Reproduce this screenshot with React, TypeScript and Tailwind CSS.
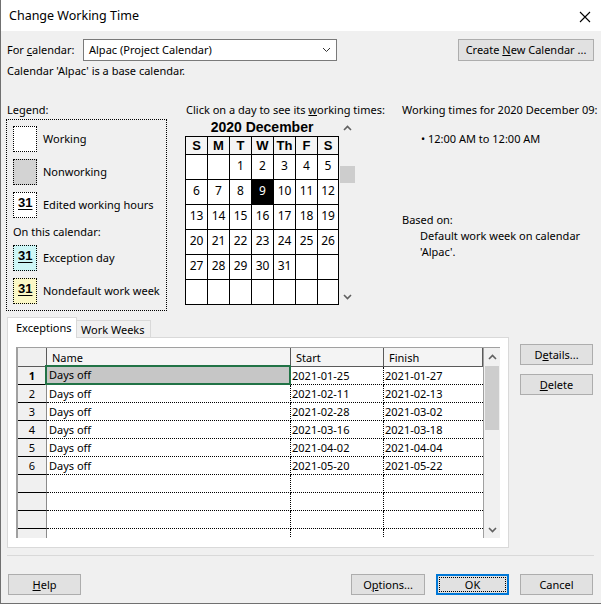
import React from "react";

function Btn({ children, className = "" }: { children: React.ReactNode; className?: string }) {
  return (
    <div className={"h-[21px] bg-[#e1e1e1] border border-[#adadad] flex items-center justify-center whitespace-nowrap pb-[1px] " + className}>
      {children}
    </div>
  );
}

function ChevDown({ w = 9, c = "#606060", sw = 1.4 }: { w?: number; c?: string; sw?: number }) {
  return (
    <svg width={w} height={6} viewBox="0 0 9 6">
      <path d="M1 1 L4.5 4.5 L8 1" fill="none" stroke={c} strokeWidth={sw} />
    </svg>
  );
}
function ChevUp({ w = 9, c = "#606060", sw = 1.4 }: { w?: number; c?: string; sw?: number }) {
  return (
    <svg width={w} height={6} viewBox="0 0 9 6">
      <path d="M1 5 L4.5 1.5 L8 5" fill="none" stroke={c} strokeWidth={sw} />
    </svg>
  );
}

function Swatch({ kind }: { kind: "working" | "non" | "edited" | "exc" | "nd" }) {
  const bg =
    kind === "non"
      ? "bg-[#d3d3d3]"
      : kind === "exc"
      ? "bg-[#cdf6f6]"
      : kind === "nd"
      ? "bg-[#fbf8c6]"
      : "bg-white";
  return (
    <div className={"w-[24px] h-[26px] border border-dotted border-black shrink-0 " + bg}>
      {kind === "edited" || kind === "exc" || kind === "nd" ? (
        <div className="pl-[4px] pt-[3px] font-['Liberation_Sans',sans-serif] font-bold text-[13px] leading-[13px] underline underline-offset-[2px]">
          31
        </div>
      ) : null}
    </div>
  );
}

const weeks: (number | null)[][] = [
  [null, null, 1, 2, 3, 4, 5],
  [6, 7, 8, 9, 10, 11, 12],
  [13, 14, 15, 16, 17, 18, 19],
  [20, 21, 22, 23, 24, 25, 26],
  [27, 28, 29, 30, 31, null, null],
  [null, null, null, null, null, null, null],
];

const exceptions = [
  ["2021-01-25", "2021-01-27"],
  ["2021-02-11", "2021-02-13"],
  ["2021-02-28", "2021-03-02"],
  ["2021-03-16", "2021-03-18"],
  ["2021-04-02", "2021-04-04"],
  ["2021-05-20", "2021-05-22"],
];

export default function App() {
  return (
    <div className="w-[601px] h-[604px] bg-[#f0f0f0] text-[11px] text-black font-['Noto_Sans',sans-serif] border-l border-b border-[#707070] overflow-hidden leading-none whitespace-nowrap">
      {/* Title bar */}
      <div className="h-[31px] bg-white flex items-center justify-between pl-[8px] pr-[10px] pt-[2px]">
        <span className="text-[12.5px]">Change Working Time</span>
        <svg width="12" height="12" viewBox="0 0 12 12">
          <path d="M1 1 L11 11 M11 1 L1 11" stroke="#000" strokeWidth="1.1" />
        </svg>
      </div>

      <div className="pl-[6px] pr-[7px]">
        {/* For calendar row */}
        <div className="mt-[8px] h-[22px] flex items-center">
          <div className="w-[76px] pb-[1px]">
            For <span className="underline">c</span>alendar:
          </div>
          <div className="w-[254px] h-[22px] bg-white border border-[#7a7a7a] flex items-center justify-between pl-[5px] pr-[5px] pb-[1px]">
            <span>Alpac (Project Calendar)</span>
            <ChevDown w={9} c="#333" sw={1} />
          </div>
          <div className="flex-1" />
          <Btn className="w-[136px] h-[22px]">
            <span>
              Create <span className="underline">N</span>ew Calendar ...
            </span>
          </Btn>
        </div>
        <div className="mt-[2px] h-[16px] leading-[16px]">Calendar 'Alpac' is a base calendar.</div>

        {/* Middle section */}
        <div className="mt-[23px] flex">
          {/* Legend */}
          <div className="-ml-[1px] w-[161px] flex flex-col shrink-0">
            <div className="h-[16px] leading-[16px] pl-[1px]">Legend:</div>
            <div className="mt-[1px] h-[192px] border border-dotted border-black pl-[6px] pt-[6px] flex flex-col">
              <div className="flex items-center gap-[6px]">
                <Swatch kind="working" />
                <span className="pb-[2px]">Working</span>
              </div>
              <div className="mt-[7px] flex items-center gap-[6px]">
                <Swatch kind="non" />
                <span className="pb-[2px]">Nonworking</span>
              </div>
              <div className="mt-[7px] flex items-center gap-[6px]">
                <Swatch kind="edited" />
                <span className="pb-[2px]">Edited working hours</span>
              </div>
              <div className="mt-[6px] h-[16px] leading-[16px]">On this calendar:</div>
              <div className="mt-[5px] flex items-center gap-[6px]">
                <Swatch kind="exc" />
                <span className="pb-[2px]">Exception day</span>
              </div>
              <div className="mt-[7px] flex items-center gap-[6px]">
                <Swatch kind="nd" />
                <span className="pb-[2px]">Nondefault work week</span>
              </div>
            </div>
          </div>

          {/* Calendar */}
          <div className="ml-[18px] w-[171px] shrink-0 flex flex-col">
            <div className="h-[16px] leading-[16px] pl-[1px]">
              Click on a day to see its <span className="underline">w</span>orking times:
            </div>
            <div className="mt-[1px] flex">
              <div className="flex flex-col">
                <div className="h-[17px] flex items-center justify-center pb-[1px] font-['Liberation_Sans',sans-serif] font-bold text-[14px]">
                  2020 December
                </div>
                <div className="grid grid-cols-[repeat(6,21px)_20px] grid-rows-[17px_repeat(6,24px)] gap-px bg-black p-px w-fit">
                  {["S", "M", "T", "W", "Th", "F", "S"].map((h, i) => (
                    <div
                      key={"h" + i}
                      className="bg-[#f4f4f4] flex items-center justify-center font-['Liberation_Sans',sans-serif] font-bold text-[13px]"
                    >
                      {h}
                    </div>
                  ))}
                  {weeks.flat().map((d, i) => (
                    <div
                      key={i}
                      className={
                        d === 9
                          ? "bg-black text-white flex items-center justify-center text-[12px] pb-[2px]"
                          : "bg-white flex items-center justify-center text-[12px] pb-[2px]"
                      }
                    >
                      {d ?? ""}
                    </div>
                  ))}
                </div>
              </div>
              <div className="w-[16px] h-[186px] flex flex-col">
                <div className="h-[17px] flex items-center justify-center">
                  <ChevUp w={9} c="#606060" sw={1.6} />
                </div>
                <div className="mt-[30px] h-[17px] bg-[#cdcdcd] ml-[1px] w-[15px]" />
                <div className="flex-1" />
                <div className="h-[17px] flex items-center justify-center">
                  <ChevDown w={9} c="#606060" sw={1.6} />
                </div>
              </div>
            </div>
          </div>

          {/* Info */}
          <div className="ml-[46px] flex flex-col">
            <div className="h-[16px] leading-[16px]">Working times for 2020 December 09:</div>
            <div className="mt-[13px] h-[16px] leading-[16px] pl-[19px]">• 12:00 AM to 12:00 AM</div>
            <div className="mt-[65px] h-[16px] leading-[16px]">Based on:</div>
            <div className="h-[16px] leading-[16px] pl-[18px]">Default work week on calendar</div>
            <div className="h-[15px] leading-[15px] pl-[18px]">'Alpac'.</div>
          </div>
        </div>

        {/* Tabs */}
        <div className="mt-[6px] h-[20px] flex items-end">
          <div className="relative z-10 -mb-px h-[21px] w-[70px] bg-white border-l border-t border-r border-[#d9d9d9] flex items-center pl-[8px] pb-[2px]">
            Exceptions
          </div>
          <div className="h-[17px] w-[74px] bg-[#f0f0f0] border-t border-r border-[#d9d9d9] flex items-center pl-[4px]">
            Work Weeks
          </div>
        </div>

        <div className="flex">
          {/* Panel */}
          <div className="w-[502px] h-[211px] bg-white border border-[#d9d9d9] pl-[8px] pt-[9px]">
            <div className="w-[484px] h-[191px] border-t border-l-2 border-[#a0a0a0] flex overflow-hidden">
              <div className="flex flex-col">
                {/* header */}
                <div className="flex h-[19px] shrink-0">
                  <div className="w-[29px] bg-[#f0f0f0] border-r border-b border-[#5a5a5a]" />
                  <div className="w-[244px] bg-[#f4f4f4] border-r border-b border-[#5a5a5a] flex items-center pt-[1px] pl-[5px]">
                    Name
                  </div>
                  <div className="w-[93px] bg-[#f4f4f4] border-r border-b border-[#5a5a5a] flex items-center pt-[1px] pl-[5px]">
                    Start
                  </div>
                  <div className="w-[99px] bg-[#f4f4f4] border-r border-b border-[#5a5a5a] flex items-center pt-[1px] pl-[5px]">
                    Finish
                  </div>
                </div>
                {Array.from({ length: 10 }).map((_, i) => {
                  const ex = exceptions[i];
                  const sel = i === 0;
                  return (
                    <div key={i} className="flex h-[18px] shrink-0">
                      <div
                        className={
                          "w-[29px] bg-[#f0f0f0] border-r border-r-[#8a8a8a] border-b border-b-black flex items-center justify-center pb-[1px] " +
                          (sel ? "font-bold" : "")
                        }
                      >
                        {ex ? i + 1 : ""}
                      </div>
                      {sel ? (
                        <div className="relative w-[244px] border-r border-b border-dotted border-black">
                          <div className="absolute -left-[2px] -top-[2px] w-[246px] h-[20px] bg-[#c6c6c6] border-2 border-[#217346] flex items-center pl-[2px] pb-[1px]">
                            Days off
                          </div>
                        </div>
                      ) : (
                        <div className="w-[244px] border-r border-b border-dotted border-black flex items-center pl-[2px] pb-[1px]">
                          {ex ? "Days off" : ""}
                        </div>
                      )}
                      <div className="w-[93px] border-r border-b border-dotted border-black flex items-center pl-[1px] pb-[1px]">
                        {ex ? ex[0] : ""}
                      </div>
                      <div className="w-[99px] border-b border-dotted border-black border-r-0 flex items-center pl-[1px] pb-[1px]">
                        {ex ? ex[1] : ""}
                      </div>
                    </div>
                  );
                })}
              </div>
              {/* scrollbar */}
              <div className="w-[17px] h-full border-l border-[#a0a0a0] bg-[#f0f0f0] flex flex-col">
                <div className="h-[17px] flex items-center justify-center">
                  <ChevUp w={9} c="#606060" sw={1.6} />
                </div>
                <div className="mt-px h-[64px] mx-[1px] bg-[#cdcdcd]" />
                <div className="flex-1" />
                <div className="h-[17px] flex items-center justify-center">
                  <ChevDown w={9} c="#606060" sw={1.6} />
                </div>
              </div>
            </div>
          </div>

          {/* Right buttons */}
          <div className="ml-[11px] pt-[7px] flex flex-col gap-[9px]">
            <Btn className="w-[73px]">
              <span>
                D<span className="underline">e</span>tails...
              </span>
            </Btn>
            <Btn className="w-[73px]">
              <span>
                <span className="underline">D</span>elete
              </span>
            </Btn>
          </div>
        </div>

        <div className="mt-[7px] h-px bg-[#d9d9d9]" />

        <div className="mt-[18px] flex items-center">
          <Btn className="ml-[1px] w-[73px]">
            <span>
              <span className="underline">H</span>elp
            </span>
          </Btn>
          <div className="flex-1" />
          <Btn className="w-[74px]">
            <span>
              O<span className="underline">p</span>tions...
            </span>
          </Btn>
          <div className="ml-[11px] w-[73px] h-[21px] bg-[#e1e1e1] border-2 border-[#0078d7] flex items-center justify-center p-[1px]">
            <div className="w-full h-full border border-dotted border-black flex items-center justify-center pb-[1px]">OK</div>
          </div>
          <Btn className="ml-[11px] w-[73px] mr-[1px]">
            <span>Cancel</span>
          </Btn>
        </div>
      </div>
    </div>
  );
}
